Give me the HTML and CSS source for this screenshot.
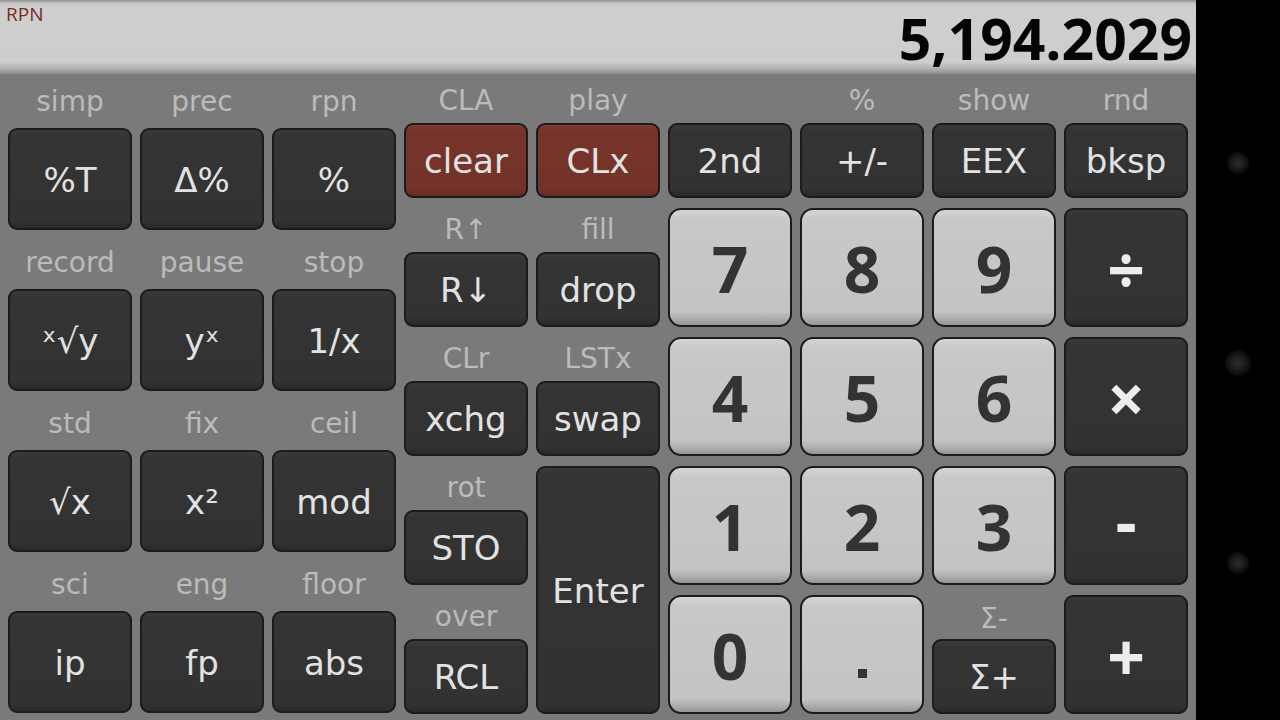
FILE: index.html
```html
<!DOCTYPE html>
<html>
<head>
<meta charset="utf-8">
<link rel="stylesheet" href="styles.css">
</head>
<body>
<div class="screen">
  <div class="calc">
    <div class="display">
      <span class="mode">RPN</span>
      <span class="value">5,194.2029</span>
    </div>
    <div class="keys">
      <div class="left">
        <div class="cell"><div class="lbl">simp</div><div class="key">%T</div></div>
        <div class="cell"><div class="lbl">prec</div><div class="key">Δ%</div></div>
        <div class="cell"><div class="lbl">rpn</div><div class="key">%</div></div>
        <div class="cell"><div class="lbl">record</div><div class="key">ˣ√y</div></div>
        <div class="cell"><div class="lbl">pause</div><div class="key">yˣ</div></div>
        <div class="cell"><div class="lbl">stop</div><div class="key">1/x</div></div>
        <div class="cell"><div class="lbl">std</div><div class="key">√x</div></div>
        <div class="cell"><div class="lbl">fix</div><div class="key">x²</div></div>
        <div class="cell"><div class="lbl">ceil</div><div class="key">mod</div></div>
        <div class="cell"><div class="lbl">sci</div><div class="key">ip</div></div>
        <div class="cell"><div class="lbl">eng</div><div class="key">fp</div></div>
        <div class="cell"><div class="lbl">floor</div><div class="key">abs</div></div>
      </div>
      <div class="right">
        <div class="cell"><div class="lbl">CLA</div><div class="key red">clear</div></div>
        <div class="cell"><div class="lbl">play</div><div class="key red">CLx</div></div>
        <div class="cell"><div class="lbl"></div><div class="key">2nd</div></div>
        <div class="cell"><div class="lbl">%</div><div class="key">+/-</div></div>
        <div class="cell"><div class="lbl">show</div><div class="key">EEX</div></div>
        <div class="cell"><div class="lbl">rnd</div><div class="key">bksp</div></div>

        <div class="cell"><div class="lbl">R↑</div><div class="key">R↓</div></div>
        <div class="cell"><div class="lbl">fill</div><div class="key">drop</div></div>
        <div class="key num big">7</div>
        <div class="key num big">8</div>
        <div class="key num big">9</div>
        <div class="key op big">÷</div>

        <div class="cell"><div class="lbl">CLr</div><div class="key">xchg</div></div>
        <div class="cell"><div class="lbl">LSTx</div><div class="key">swap</div></div>
        <div class="key num big">4</div>
        <div class="key num big">5</div>
        <div class="key num big">6</div>
        <div class="key op big">×</div>

        <div class="cell"><div class="lbl">rot</div><div class="key">STO</div></div>
        <div class="key big enter">Enter</div>
        <div class="key num big">1</div>
        <div class="key num big">2</div>
        <div class="key num big">3</div>
        <div class="key op big minus">-</div>

        <div class="cell"><div class="lbl">over</div><div class="key">RCL</div></div>
        <div class="key num big">0</div>
        <div class="key num big"><span class="dot"></span></div>
        <div class="cell"><div class="lbl sig">Σ-</div><div class="key">Σ+</div></div>
        <div class="key op big">+</div>
      </div>
    </div>
  </div>
  <div class="side">
    <span class="led"></span>
    <span class="led mid"></span>
    <span class="led"></span>
  </div>
</div>
</body>
</html>
```

FILE: styles.css
```css
html, body {
  margin: 0;
  padding: 0;
  background: #000;
}
body {
  width: 1280px;
  height: 720px;
  overflow: hidden;
  font-family: "DejaVu Sans", sans-serif;
}
.screen {
  display: flex;
  width: 1280px;
  height: 720px;
}
.calc {
  width: 1196px;
  display: flex;
  flex-direction: column;
  background: #7a7a7a;
}
.display {
  height: 74px;
  flex: 0 0 74px;
  display: flex;
  justify-content: space-between;
  align-items: flex-start;
  padding: 0 4px 0 6px;
  background: linear-gradient(to bottom, #8c8c8c 0, #c4c4c4 3px, #cfcfcf 8px, #cdcdcd 62px, #b4b4b4 68px, #8e8e8e 74px);
}
.mode {
  font-family: "Open Sans", sans-serif;
  font-size: 19px;
  line-height: 19px;
  margin-top: 5px;
  color: #7b2b22;
}
.value {
  font-family: "Open Sans", sans-serif;
  font-weight: 700;
  font-size: 57px;
  line-height: 76px;
  color: #050505;
}
.keys {
  flex: 1;
  display: flex;
  gap: 8px;
  padding-left: 8px;
}
.left {
  display: grid;
  grid-template-columns: repeat(3, 124px);
  grid-template-rows: repeat(4, 156px);
  column-gap: 8px;
  row-gap: 5px;
}
.right {
  display: grid;
  grid-template-columns: repeat(6, 124px);
  grid-template-rows: repeat(5, 124px);
  column-gap: 8px;
  row-gap: 5px;
}
.cell {
  display: flex;
  flex-direction: column;
}
.lbl {
  height: 54px;
  flex: 0 0 54px;
  display: flex;
  align-items: center;
  justify-content: center;
  font-size: 28px;
  color: #bbbbbb;
  padding-top: 1px;
  box-sizing: border-box;
}
.right .lbl {
  height: 49px;
  flex: 0 0 49px;
  padding-top: 3px;
}
.lbl.sig {
  padding-top: 8px;
}
.key {
  flex: 1;
  box-sizing: border-box;
  display: flex;
  align-items: center;
  justify-content: center;
  border: 2px solid #1b1b1b;
  border-radius: 9px;
  background: linear-gradient(to bottom, #3a3a3a 0, #343434 6px, #323232 calc(100% - 8px), #292929 100%);
  color: #e2e2e2;
  font-size: 34px;
  padding-top: 1px;
}
.key.red {
  background: linear-gradient(to bottom, #7e3a30 0, #76342a 6px, #74332a calc(100% - 8px), #662c24 100%);
}
.key.big {
  margin-top: 5px;
}
.key.num {
  border-radius: 13px;
  background: linear-gradient(to bottom, #d4d4d4 0, #c8c8c8 10px, #c4c4c4 calc(100% - 14px), #b0b0b0 calc(100% - 7px), #959595 100%);
  color: #333333;
  font-family: "Open Sans", sans-serif;
  font-weight: 700;
  font-size: 64px;
}
.key.op {
  font-family: "Open Sans", sans-serif;
  font-weight: 700;
  font-size: 66px;
  color: #ededed;
}
.key.minus {
  padding-bottom: 12px;
}
.key.enter {
  grid-row: span 2;
}
.dot {
  width: 9px;
  height: 9px;
  background: #333;
  margin-top: 36px;
}
.side {
  width: 84px;
  display: flex;
  flex-direction: column;
  align-items: center;
  padding-top: 152px;
  gap: 176px;
  box-sizing: border-box;
}
.led {
  width: 22px;
  height: 22px;
  border-radius: 50%;
  background: radial-gradient(circle, #2e2e2e 0, #1e1e1e 35%, #0a0a0a 70%, #000 100%);
}
.led.mid {
  width: 26px;
  height: 26px;
}
```
